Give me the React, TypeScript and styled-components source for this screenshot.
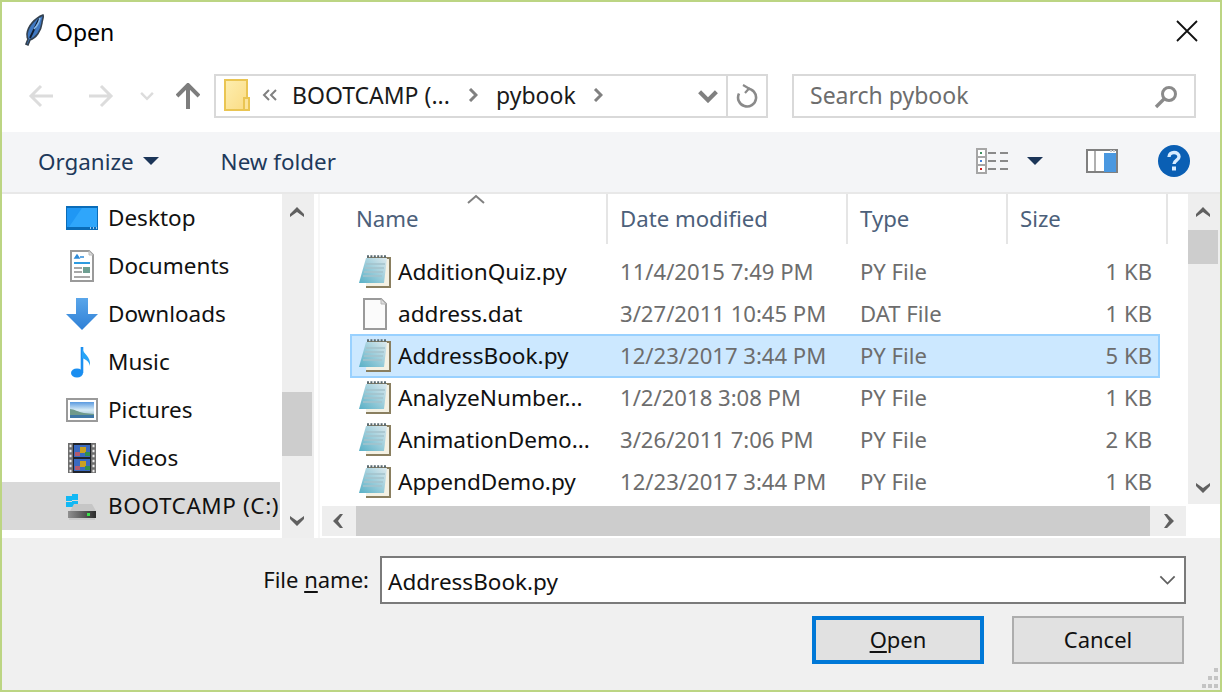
import styled, { createGlobalStyle } from 'styled-components';

const GlobalStyle = createGlobalStyle`
  html, body { margin: 0; padding: 0; background: #fff; }
  * { box-sizing: border-box; }
`;

const font = `"Noto Sans", "Open Sans", "Liberation Sans", sans-serif`;

const Dialog = styled.div`
  width: 1222px;
  height: 692px;
  border: 2px solid #bcd583;
  background: #fff;
  display: flex;
  flex-direction: column;
  font-family: ${font};
  font-size: 22px;
  overflow: hidden;
`;

const TitleBar = styled.div`
  height: 62px;
  flex: none;
  display: flex;
  align-items: center;
  padding: 0 22px 4px 20px;
  gap: 9px;
`;

const TitleText = styled.div`
  flex: 1;
  color: #000;
  font-size: 23px;
  margin-top: 2px;
`;

const NavRow = styled.div`
  height: 68px;
  flex: none;
  display: grid;
  grid-template-columns: 60px 52px 36px 40px 554px 404px;
  padding: 10px 0 14px 24px;
  align-items: center;
`;

const NavButton = styled.div`
  height: 44px;
  display: flex;
  align-items: center;
  padding-left: 2px;
`;

const AddressBox = styled.div`
  height: 44px;
  border: 2px solid #d9d9d9;
  display: flex;
  align-items: center;
  color: #1a1a1a;
  font-size: 23px;
`;

const Crumb = styled.span<{ $left: number; $width: number }>`
  margin: 0 0 3px ${(p) => p.$left}px;
  width: ${(p) => p.$width}px;
  flex: none;
  white-space: nowrap;
  display: flex;
  align-items: center;
`;

const CrumbGap = styled.span`
  flex: none;
  display: flex;
  margin-bottom: 2px;
`;

const AddressEnd = styled.div`
  margin-left: auto;
  display: flex;
  align-items: center;
  height: 100%;
`;

const RefreshCell = styled.div`
  width: 40px;
  height: 100%;
  margin-left: 8px;
  border-left: 2px solid #d9d9d9;
  display: flex;
  align-items: center;
  justify-content: center;
`;

const SearchBox = styled.div`
  height: 44px;
  margin-left: 24px;
  width: 404px;
  border: 2px solid #d9d9d9;
  display: flex;
  align-items: center;
  justify-content: space-between;
  padding: 0 16px 0 16px;
  color: #6d6d6d;
  font-size: 23px;
`;

const SearchText = styled.span`
  margin-bottom: 2px;
`;

const Toolbar = styled.div`
  height: 62px;
  flex: none;
  background: #f4f5f7;
  border-bottom: 2px solid #e8e8e8;
  display: flex;
  align-items: center;
  padding: 0 30px 2px 36px;
  color: #1e395b;
  font-size: 22.4px;
`;

const ToolItem = styled.div<{ $left?: number }>`
  display: flex;
  align-items: center;
  gap: 9px;
  margin-left: ${(p) => p.$left ?? 0}px;
`;

const ToolSpacer = styled.div`
  flex: 1;
`;

const Main = styled.div`
  height: 344px;
  flex: none;
  display: grid;
  grid-template-columns: 280px 32px 8px 1fr;
`;

const SideList = styled.div`
  display: flex;
  flex-direction: column;
`;

const SideRow = styled.div<{ $active?: boolean }>`
  height: 48px;
  flex: none;
  display: flex;
  align-items: center;
  gap: 10px;
  padding-left: 64px;
  margin-right: 2px;
  background: ${(p) => (p.$active ? '#d9d9d9' : 'transparent')};
  color: #111;
  white-space: nowrap;
  font-size: 22.5px;
  letter-spacing: ${(p) => (p.$active ? '0.6px' : '0')};
`;

const SideLabel = styled.span`
  margin-bottom: 2px;
`;

const SideIcon = styled.div`
  width: 32px;
  height: 32px;
  flex: none;
  display: flex;
  align-items: center;
  justify-content: center;
`;

const VScroll = styled.div`
  width: 32px;
  height: 100%;
  background: #eeeeee;
  position: relative;
`;

const VThumb = styled.div<{ $top: number; $height: number }>`
  position: absolute;
  left: 0;
  width: 30px;
  top: ${(p) => p.$top}px;
  height: ${(p) => p.$height}px;
  background: #cdcdcd;
`;

const ScrollArrow = styled.svg<{ $top?: number; $left?: number }>`
  position: absolute;
  top: ${(p) => p.$top ?? 0}px;
  left: ${(p) => p.$left ?? 0}px;
`;

const Splitter = styled.div`
  border-left: 4px solid #fff;
  border-right: 2px solid #fff;
  background: #f7f7f7;
`;

const ListPane = styled.div`
  display: flex;
  flex-direction: column;
  min-width: 0;
`;

const ListTop = styled.div`
  height: 310px;
  flex: none;
  display: flex;
`;

const ListBody = styled.div`
  flex: 1;
  position: relative;
  overflow: hidden;
`;

const HeaderRow = styled.div`
  height: 50px;
  display: grid;
  grid-template-columns: 286px 240px 160px 160px;
  color: #4c607a;
  font-size: 22.2px;
`;

const HeaderCell = styled.div<{ $pad: number }>`
  padding-left: ${(p) => p.$pad}px;
  border-right: 2px solid #e5e5e5;
  display: flex;
  align-items: center;
  padding-bottom: 2px;
`;

const SortCaret = styled.svg`
  position: absolute;
  left: 145px;
  top: 0;
`;

const Rows = styled.div`
  margin: 7px 0 0 29px;
  width: 808px;
`;

const FileRow = styled.div<{ $selected?: boolean }>`
  height: 42px;
  display: grid;
  grid-template-columns: 269px 240px 160px 132px;
  align-items: center;
  background: ${(p) => (p.$selected ? '#cce8ff' : 'transparent')};
  outline: ${(p) => (p.$selected ? '2px solid #99d1ff' : 'none')};
  outline-offset: -1px;
  color: #6d6d6d;
  font-size: 22.1px;
  white-space: nowrap;
`;

const RowText = styled.div`
  margin-bottom: 2px;
`;

const NameCell = styled.div`
  display: flex;
  align-items: center;
  gap: 7px;
  padding-left: 8px;
  color: #111;
  font-size: 22.6px;
`;

const FileIconBox = styled.div`
  width: 32px;
  height: 34px;
  flex: none;
  display: flex;
  align-items: center;
  justify-content: center;
`;

const SizeCell = styled(RowText)`
  text-align: right;
`;

const HScrollRow = styled.div`
  height: 34px;
  flex: none;
  display: flex;
`;

const HScroll = styled.div`
  width: 864px;
  height: 30px;
  margin-top: 2px;
  background: #eeeeee;
  position: relative;
`;

const HThumb = styled.div`
  position: absolute;
  left: 34px;
  width: 794px;
  top: 0;
  height: 100%;
  background: #cdcdcd;
`;

const Footer = styled.div`
  flex: 1;
  background: #f0f0f0;
  position: relative;
  padding: 18px 0 0 0;
`;

const NameField = styled.div`
  display: flex;
  align-items: center;
  justify-content: flex-end;
  gap: 11px;
  padding-right: 34px;
  font-size: 22px;
  color: #111;
`;

const FieldLabel = styled.label`
  position: relative;
  top: -1px;
  u { text-underline-offset: 3px; }
`;

const FieldInput = styled.div`
  width: 806px;
  height: 48px;
  border: 2px solid #7a7a7a;
  background: #fff;
  display: flex;
  align-items: center;
  justify-content: space-between;
  padding: 0 8px 0 6px;
  font-size: 22.5px;
`;

const InputText = styled.span`
  margin-top: 2px;
`;

const ButtonRow = styled.div`
  display: flex;
  justify-content: flex-end;
  gap: 28px;
  padding-right: 36px;
  margin-top: 12px;
`;

const DialogButton = styled.div<{ $primary?: boolean }>`
  width: 172px;
  height: 48px;
  background: #e1e1e1;
  border: ${(p) => (p.$primary ? '4px solid #0078d7' : '2px solid #adadad')};
  display: flex;
  align-items: center;
  justify-content: center;
  padding-bottom: 2px;
  font-size: 22px;
  color: #111;
  u { text-underline-offset: 3px; }
`;

const Grip = styled.svg`
  position: absolute;
  right: 2px;
  bottom: 2px;
`;

const Feather = () => (
  <svg width="24" height="34" viewBox="0 0 24 34">
    <path d="M21 1C13 4 6 12 5 20c0 2 0 4 1 5l-2 5 2 1 2-5c6-2 11-9 12-17 0-3 2-6 1-8z" fill="#3f77c0" stroke="#33404e" strokeWidth="1.6" />
    <path d="M17 5 8 24" stroke="#101c2e" strokeWidth="1.8" fill="none" />
    <path d="M18 4c-1 5-3 8-6 11" stroke="#86b8ea" strokeWidth="1.6" fill="none" />
  </svg>
);

const BackArrow = ({ flip }: { flip?: boolean }) => (
  <svg width="26" height="24" viewBox="0 0 26 24" style={flip ? { transform: 'scaleX(-1)' } : undefined}>
    <path d="M25 12H3M13 2 3 12l10 10" fill="none" stroke="#dcdcdc" strokeWidth="3" />
  </svg>
);

const SmallChevron = ({ color = '#dcdcdc', w = 14, sw = 2.5 }: { color?: string; w?: number; sw?: number }) => (
  <svg width={w} height={w * 0.7} viewBox="0 0 14 10">
    <path d="M1 2l6 6 6-6" fill="none" stroke={color} strokeWidth={sw} />
  </svg>
);

const UpArrow = () => (
  <svg width="24" height="26" viewBox="0 0 24 26">
    <path d="M12 26V3M1 13 12 2l11 11" fill="none" stroke="#7d7d7d" strokeWidth="4" />
  </svg>
);

const FolderIcon = () => (
  <svg width="26" height="32" viewBox="0 0 26 32">
    <defs>
      <linearGradient id="fold" x1="0" y1="0" x2="1" y2="1">
        <stop offset="0" stopColor="#fdeeb0" />
        <stop offset="1" stopColor="#fbdc84" />
      </linearGradient>
    </defs>
    <rect x="1" y="1" width="22" height="30" fill="url(#fold)" stroke="#eac552" strokeWidth="2" />
    <rect x="20" y="19" width="5" height="12" fill="#fce49a" stroke="#eac552" strokeWidth="2" />
  </svg>
);

const Guillemet = () => (
  <svg width="16" height="12" viewBox="0 0 16 12">
    <path d="M7 1 2 6l5 5M14 1 9 6l5 5" fill="none" stroke="#808080" strokeWidth="2" />
  </svg>
);

const CrumbArrow = () => (
  <svg width="10" height="14" viewBox="0 0 10 14">
    <path d="M2 1l6 6-6 6" fill="none" stroke="#808080" strokeWidth="3" />
  </svg>
);

const RefreshIcon = () => (
  <svg width="22" height="24" viewBox="0 0 22 24">
    <path d="M11 4.500a9 9 0 1 1-8 5" fill="none" stroke="#8a8a8a" strokeWidth="2.6" />
    <path d="M7 1l6 3.500-4 4.500" fill="none" stroke="#8a8a8a" strokeWidth="2.2" />
  </svg>
);

const SearchIcon = () => (
  <svg width="24" height="24" viewBox="0 0 24 24" style={{ marginTop: 2 }}>
    <circle cx="15" cy="9" r="6.5" fill="none" stroke="#8a8a8a" strokeWidth="3" />
    <path d="M10 14 2 22" stroke="#8a8a8a" strokeWidth="3.4" />
  </svg>
);

const DropCaret = () => (
  <svg width="16" height="8" viewBox="0 0 16 8">
    <path d="M0 0h16L8 8z" fill="#1b3558" />
  </svg>
);

const ViewIcon = () => (
  <svg width="32" height="26" viewBox="0 0 32 26">
    <rect x="1" y="1" width="9" height="24" fill="#fff" stroke="#a6a6a6" strokeWidth="2" />
    <path d="M1 9h9M1 17h9" stroke="#a6a6a6" strokeWidth="2" />
    <rect x="4" y="4" width="2" height="2" fill="#3f8f5f" />
    <rect x="4" y="12" width="2" height="2" fill="#3f7fe0" />
    <rect x="4" y="20" width="2" height="2" fill="#d02020" />
    <path d="M12 5h8M24 5h8M12 13h8M24 13h8M12 21h8M24 21h8" stroke="#8a8a8a" strokeWidth="2" />
  </svg>
);

const PaneIcon = () => (
  <svg width="32" height="24" viewBox="0 0 32 24">
    <rect x="1" y="1" width="30" height="22" fill="#fff" stroke="#808080" strokeWidth="2" />
    <path d="M9 2v20" stroke="#b0b0b0" strokeWidth="2" />
    <rect x="18" y="4" width="12" height="19" fill="#4a98e0" />
    <path d="M24 2h6" stroke="#c8c8c8" strokeWidth="2" strokeDasharray="2 1" />
  </svg>
);

const HelpIcon = () => (
  <svg width="32" height="32" viewBox="0 0 32 32">
    <circle cx="16" cy="16" r="16" fill="#0a5fb4" />
    <path d="M11 12c0-3 2.400-4.500 5-4.500s5 1.500 5 4.200c0 3.800-5 3.600-5 7.300" fill="none" stroke="#d8ecff" strokeWidth="3.400" />
    <rect x="14" y="21.500" width="4" height="4" fill="#d8ecff" />
  </svg>
);

const DesktopIcon = () => (
  <svg width="32" height="24" viewBox="0 0 32 24">
    <rect width="32" height="24" fill="#0a6cb8" />
    <rect x="1" y="2" width="30" height="19" fill="#1f97f4" />
    <path d="M3 21 16 2h15v19z" fill="#2fa6fb" />
    <path d="M24 22h1M27 22h1M30 22h1" stroke="#cfe8fb" strokeWidth="1.500" />
  </svg>
);

const DocumentsIcon = () => (
  <svg width="24" height="32" viewBox="0 0 24 32">
    <path d="M1 1h18l4 4v26H1z" fill="#fff" stroke="#9a9a9a" strokeWidth="2" />
    <path d="M19 1v4h4" fill="#ddd" stroke="#bbb" />
    <path d="M5 8h4l-2-3zM10 7h4" stroke="#2e8bd8" strokeWidth="1.500" fill="#2e8bd8" />
    <path d="M4 13h16" stroke="#2e9be0" strokeWidth="2" />
    <path d="M4 18h8M4 22h8M4 27h16" stroke="#a8a8a8" strokeWidth="2" />
    <rect x="13" y="17" width="7" height="6" fill="#6f9f92" />
  </svg>
);

const DownloadsIcon = () => (
  <svg width="32" height="32" viewBox="0 0 32 32">
    <defs>
      <linearGradient id="dl" x1="0" y1="0" x2="0" y2="1">
        <stop offset="0" stopColor="#5aa6ea" />
        <stop offset="1" stopColor="#2f80d6" />
      </linearGradient>
    </defs>
    <path d="M10 0h12v16h10L16 32 0 16h10z" fill="url(#dl)" />
  </svg>
);

const MusicIcon = () => (
  <svg width="24" height="32" viewBox="0 0 24 32">
    <ellipse cx="7" cy="27" rx="6" ry="4.500" fill="#1a8ef0" />
    <path d="M12 27V1" stroke="#1a8ef0" strokeWidth="2.600" />
    <path d="M12 2c1 6 9 8 8 18-1-5-5-7-8-8z" fill="#27a4f7" />
  </svg>
);

const PicturesIcon = () => (
  <svg width="32" height="24" viewBox="0 0 32 24">
    <defs>
      <linearGradient id="sky" x1="0" y1="0" x2="0" y2="1">
        <stop offset="0" stopColor="#5a9ae0" />
        <stop offset="0.5" stopColor="#d8ecf6" />
        <stop offset="1" stopColor="#8ab0c8" />
      </linearGradient>
    </defs>
    <rect x="1" y="1" width="30" height="22" fill="#fff" stroke="#9a9a9a" strokeWidth="2" />
    <rect x="4" y="4" width="24" height="16" fill="url(#sky)" />
    <path d="M4 11c4 0 8 3 14 4l10 1v4H4z" fill="#6f9a8c" />
    <path d="M4 17h24v3H4z" fill="#3f78a6" />
  </svg>
);

const VideosIcon = () => (
  <svg width="28" height="30" viewBox="0 0 28 30">
    <rect width="28" height="30" fill="#6e6e6e" />
    <rect x="5" y="0" width="18" height="30" fill="#20242a" />
    <rect x="6" y="2" width="16" height="12" fill="#3a6ac0" />
    <rect x="6" y="16" width="16" height="12" fill="#3a6ac0" />
    <path d="M12 4h6v6h-6zM12 18h6v6h-6z" fill="#c8a020" />
    <path d="M7 9h5v4H7zM7 23h5v4H7z" fill="#b05a70" />
    <path d="M17 9h5v4h-5zM17 23h5v4h-5z" fill="#2f8f4f" />
    <path d="M1.500 3h2M1.500 8h2M1.500 13h2M1.500 18h2M1.500 23h2M1.500 28h2M24.500 3h2M24.500 8h2M24.500 13h2M24.500 18h2M24.500 23h2M24.500 28h2" stroke="#eee" strokeWidth="2.500" />
  </svg>
);

const DriveIcon = () => (
  <svg width="32" height="28" viewBox="0 0 32 28">
    <defs>
      <linearGradient id="band" x1="0" y1="0" x2="1" y2="0">
        <stop offset="0" stopColor="#909090" />
        <stop offset="1" stopColor="#2c2c2c" />
      </linearGradient>
    </defs>
    <path d="M0 4h6v5H0zM6 2h6v6H6zM0 10h6v5H0zM6 9h6v6H6z" fill="#12b8f4" />
    <path d="M4 19l4-7h18l4 7z" fill="#c6c6c6" />
    <rect x="2" y="19" width="28" height="7" fill="url(#band)" />
    <rect x="3" y="26" width="26" height="2" fill="#cacaca" />
    <rect x="21" y="21" width="3" height="3" fill="#3ae04a" />
  </svg>
);

const NotepadIcon = () => (
  <svg width="32" height="34" viewBox="0 0 32 34">
    <defs>
      <linearGradient id="pad" x1="0" y1="1" x2="1" y2="0">
        <stop offset="0" stopColor="#58b0c6" />
        <stop offset="1" stopColor="#dde9ee" />
      </linearGradient>
    </defs>
    <path d="M8 3h23v29H7" fill="#f4f1e4" stroke="#8a7f60" strokeWidth="2" />
    <path d="M7 3h21L25 28H0z" fill="url(#pad)" />
    <path d="M7 9h19M6 13h19M5 17h19M4 21h19" stroke="#a4c2cc" strokeWidth="1.600" />
    <path d="M8 1.500h20" stroke="#5a6a70" strokeWidth="2.600" strokeDasharray="2 1.400" />
  </svg>
);

const PlainFileIcon = () => (
  <svg width="24" height="32" viewBox="0 0 24 32">
    <path d="M1 1h17l5 5v25H1z" fill="#fbfbfb" stroke="#9a9a9a" strokeWidth="2" />
    <path d="M18 1v5h5z" fill="#ddd" stroke="#b5b5b5" />
  </svg>
);

const Chunky = ({ dir }: { dir: 'up' | 'down' | 'left' | 'right' }) => {
  const rotate = { up: 0, right: 90, down: 180, left: 270 }[dir];
  return (
    <g transform={`rotate(${rotate} 7 7)`}>
      <path d="M7 2 14 9v3L7 7 0 12V9z" fill="#606060" />
    </g>
  );
};

const places = [
  { label: 'Desktop', icon: <DesktopIcon /> },
  { label: 'Documents', icon: <DocumentsIcon /> },
  { label: 'Downloads', icon: <DownloadsIcon /> },
  { label: 'Music', icon: <MusicIcon /> },
  { label: 'Pictures', icon: <PicturesIcon /> },
  { label: 'Videos', icon: <VideosIcon /> },
  { label: 'BOOTCAMP (C:)', icon: <DriveIcon />, active: true },
];

const files = [
  { name: 'AdditionQuiz.py', date: '11/4/2015 7:49 PM', type: 'PY File', size: '1 KB' },
  { name: 'address.dat', date: '3/27/2011 10:45 PM', type: 'DAT File', size: '1 KB', plain: true },
  { name: 'AddressBook.py', date: '12/23/2017 3:44 PM', type: 'PY File', size: '5 KB', selected: true },
  { name: 'AnalyzeNumber...', date: '1/2/2018 3:08 PM', type: 'PY File', size: '1 KB' },
  { name: 'AnimationDemo...', date: '3/26/2011 7:06 PM', type: 'PY File', size: '2 KB' },
  { name: 'AppendDemo.py', date: '12/23/2017 3:44 PM', type: 'PY File', size: '1 KB' },
];

const App = () => (
  <Dialog>
    <GlobalStyle />
    <TitleBar>
      <Feather />
      <TitleText>Open</TitleText>
      <svg width="22" height="22" viewBox="0 0 22 22">
        <path d="M1 1l20 20M21 1 1 21" stroke="#111" strokeWidth="1.800" />
      </svg>
    </TitleBar>

    <NavRow>
      <NavButton><BackArrow /></NavButton>
      <NavButton><BackArrow flip /></NavButton>
      <NavButton><SmallChevron /></NavButton>
      <NavButton><UpArrow /></NavButton>
      <AddressBox>
        <Crumb $left={8} $width={26}><FolderIcon /></Crumb>
        <Crumb $left={12} $width={16}><Guillemet /></Crumb>
        <Crumb $left={14} $width={176}>BOOTCAMP (...</Crumb>
        <CrumbGap><CrumbArrow /></CrumbGap>
        <Crumb $left={18} $width={97}>pybook</Crumb>
        <CrumbGap><CrumbArrow /></CrumbGap>
        <AddressEnd>
          <SmallChevron color="#808080" w={20} sw={3} />
          <RefreshCell><RefreshIcon /></RefreshCell>
        </AddressEnd>
      </AddressBox>
      <SearchBox>
        <SearchText>Search pybook</SearchText>
        <SearchIcon />
      </SearchBox>
    </NavRow>

    <Toolbar>
      <ToolItem>Organize <DropCaret /></ToolItem>
      <ToolItem $left={62}>New folder</ToolItem>
      <ToolSpacer />
      <ToolItem><ViewIcon /></ToolItem>
      <ToolItem $left={19}><DropCaret /></ToolItem>
      <ToolItem $left={43}><PaneIcon /></ToolItem>
      <ToolItem $left={40}><HelpIcon /></ToolItem>
    </Toolbar>

    <Main>
      <SideList>
        {places.map((place) => (
          <SideRow key={place.label} $active={place.active}>
            <SideIcon>{place.icon}</SideIcon>
            <SideLabel>{place.label}</SideLabel>
          </SideRow>
        ))}
      </SideList>
      <VScroll>
        <VThumb $top={198} $height={64} />
        <ScrollArrow $top={11} $left={8} width="14" height="14" viewBox="0 0 14 14"><Chunky dir="up" /></ScrollArrow>
        <ScrollArrow $top={320} $left={8} width="14" height="14" viewBox="0 0 14 14"><Chunky dir="down" /></ScrollArrow>
      </VScroll>
      <Splitter />
      <ListPane>
        <ListTop>
          <ListBody>
            <HeaderRow>
              <HeaderCell $pad={34}>Name</HeaderCell>
              <HeaderCell $pad={12}>Date modified</HeaderCell>
              <HeaderCell $pad={12}>Type</HeaderCell>
              <HeaderCell $pad={12}>Size</HeaderCell>
            </HeaderRow>
            <SortCaret width="18" height="10" viewBox="0 0 18 10">
              <path d="M1 9l8-7 8 7" fill="none" stroke="#808080" strokeWidth="2" />
            </SortCaret>
            <Rows>
              {files.map((file) => (
                <FileRow key={file.name} $selected={file.selected}>
                  <NameCell>
                    <FileIconBox>{file.plain ? <PlainFileIcon /> : <NotepadIcon />}</FileIconBox>
                    <RowText>{file.name}</RowText>
                  </NameCell>
                  <RowText>{file.date}</RowText>
                  <RowText>{file.type}</RowText>
                  <SizeCell>{file.size}</SizeCell>
                </FileRow>
              ))}
            </Rows>
          </ListBody>
          <VScroll>
            <VThumb $top={36} $height={34} />
            <ScrollArrow $top={11} $left={8} width="14" height="14" viewBox="0 0 14 14"><Chunky dir="up" /></ScrollArrow>
            <ScrollArrow $top={287} $left={8} width="14" height="14" viewBox="0 0 14 14"><Chunky dir="down" /></ScrollArrow>
          </VScroll>
        </ListTop>
        <HScrollRow>
          <HScroll>
            <HThumb />
            <ScrollArrow $top={8} $left={9} width="14" height="14" viewBox="0 0 14 14"><Chunky dir="left" /></ScrollArrow>
            <ScrollArrow $top={8} $left={840} width="14" height="14" viewBox="0 0 14 14"><Chunky dir="right" /></ScrollArrow>
          </HScroll>
        </HScrollRow>
      </ListPane>
    </Main>

    <Footer>
      <NameField>
        <FieldLabel>File <u>n</u>ame:</FieldLabel>
        <FieldInput>
          <InputText>AddressBook.py</InputText>
          <SmallChevron color="#606060" w={17} sw={1.500} />
        </FieldInput>
      </NameField>
      <ButtonRow>
        <DialogButton $primary><span><u>O</u>pen</span></DialogButton>
        <DialogButton>Cancel</DialogButton>
      </ButtonRow>
      <Grip width="16" height="20" viewBox="0 0 16 20">
        <path d="M12 0h4v4h-4zM12 8h4v4h-4zM6 8h4v4H6zM12 16h4v4h-4zM6 16h4v4H6zM0 16h4v4H0z" fill="#c4c4c4" />
      </Grip>
    </Footer>
  </Dialog>
);

export default App;
